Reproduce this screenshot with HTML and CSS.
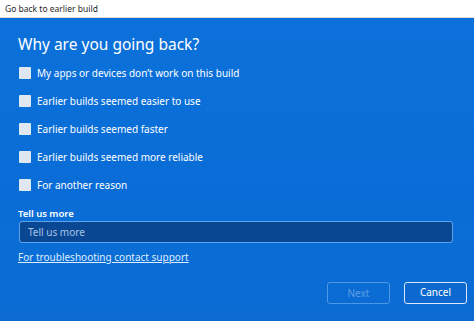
FILE: index.html
```html
<!DOCTYPE html>
<html>
<head>
<meta charset="utf-8">
<link rel="stylesheet" href="styles.css">
</head>
<body>
<div class="window">
  <div class="titlebar">Go back to earlier build</div>
  <div class="content">
    <h1 class="heading">Why are you going back?</h1>
    <ul class="options">
      <li class="option"><span class="box"></span><span>My apps or devices don’t work on this build</span></li>
      <li class="option"><span class="box"></span><span>Earlier builds seemed easier to use</span></li>
      <li class="option"><span class="box"></span><span>Earlier builds seemed faster</span></li>
      <li class="option"><span class="box"></span><span>Earlier builds seemed more reliable</span></li>
      <li class="option"><span class="box"></span><span>For another reason</span></li>
    </ul>
    <div class="field-label">Tell us more</div>
    <div class="input">Tell us more</div>
    <a class="link" href="#">For troubleshooting contact support</a>
    <div class="buttons">
      <div class="btn btn-disabled">Next</div>
      <div class="btn btn-cancel">Cancel</div>
    </div>
  </div>
</div>
</body>
</html>
```
FILE: styles.css
```css
html, body {
  margin: 0;
  padding: 0;
}
body {
  width: 474px;
  height: 321px;
  overflow: hidden;
  font-family: "Noto Sans", "Open Sans", sans-serif;
}
.window {
  width: 474px;
  height: 321px;
  display: flex;
  flex-direction: column;
  background: linear-gradient(180deg, #0c71da 0%, #0a6dd7 60%, #0b6bd3 100%);
}
.titlebar {
  height: 18px;
  background: #ffffff;
  color: #1f1f1f;
  font-size: 8.5px;
  line-height: 18px;
  padding-left: 5px;
  border-bottom: 1px solid #d9d9d9;
  box-sizing: border-box;
}
.content {
  flex: 1;
  padding: 0 7px 0 18px;
  display: flex;
  flex-direction: column;
  color: #ffffff;
}
.heading {
  margin: 15px 0 0 0;
  font-size: 15.5px;
  font-weight: 400;
  line-height: 22px;
  color: #ffffff;
}
.options {
  list-style: none;
  margin: 4px 0 0 0;
  padding: 0;
}
.option {
  height: 28px;
  display: flex;
  align-items: center;
  gap: 6px;
  font-size: 10px;
  color: #ffffff;
}
.box {
  width: 12px;
  height: 12px;
  background: #dfe8f1;
  border-radius: 1px;
  margin-left: 1px;
  flex: none;
}
.field-label {
  margin-top: 8px;
  font-size: 9.5px;
  font-weight: 600;
  line-height: 13px;
}
.input {
  margin-top: 1px;
  width: 434px;
  height: 22px;
  box-sizing: border-box;
  background: #0a4792;
  border: 1px solid #5ea2ea;
  border-radius: 3px;
  color: #a9c3e4;
  font-size: 10px;
  line-height: 20px;
  padding-left: 8px;
  margin-left: 1px;
}
.link {
  margin-top: 7px;
  font-size: 10px;
  color: #dfeeff;
  text-decoration: underline;
  line-height: 14px;
  align-self: flex-start;
}
.buttons {
  margin-top: 18px;
  display: flex;
  justify-content: flex-end;
  gap: 14px;
}
.btn {
  width: 63px;
  height: 22px;
  box-sizing: border-box;
  border-radius: 3px;
  font-size: 10px;
  line-height: 20px;
  text-align: center;
}
.btn-disabled {
  border: 1px solid #4d98e6;
  color: #5d9fe6;
}
.btn-cancel {
  border: 1.5px solid #d9e8fb;
  color: #ffffff;
  background: #0d69cf;
  line-height: 19px;
}
```
